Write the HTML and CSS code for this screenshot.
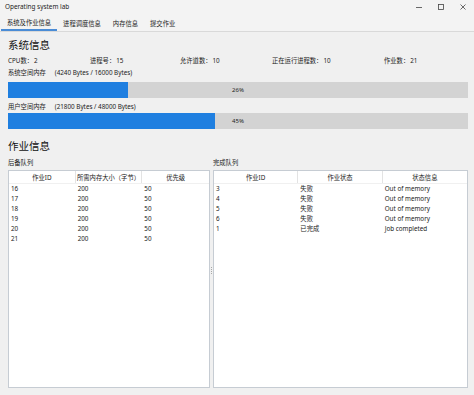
FILE: index.html
```html
<!DOCTYPE html>
<html lang="zh-CN">
<head>
<meta charset="utf-8">
<title>Operating system lab</title>
<link rel="stylesheet" href="styles.css">
</head>
<body>
<div class="window">
  <div class="titlebar">
    <span class="title">Operating system lab</span>
    <div class="controls">
      <svg class="ctl" viewBox="0 0 10 10" width="10" height="10"><line x1="2" y1="5.5" x2="8" y2="5.5"/></svg>
      <svg class="ctl" viewBox="0 0 10 10" width="10" height="10"><rect x="2.5" y="2.5" width="5" height="5"/></svg>
      <svg class="ctl" viewBox="0 0 10 10" width="10" height="10"><line x1="2.5" y1="2.5" x2="7.5" y2="7.5"/><line x1="7.5" y1="2.5" x2="2.5" y2="7.5"/></svg>
    </div>
  </div>
  <div class="tabs">
    <div class="tab active">系统及作业信息</div>
    <div class="tab">进程调度信息</div>
    <div class="tab">内存信息</div>
    <div class="tab">提交作业</div>
  </div>
  <div class="content">
    <h2 class="section-title">系统信息</h2>
    <div class="stats">
      <span>CPU数：<span class="val">2</span></span>
      <span>进程号：<span class="val">15</span></span>
      <span>允许道数：<span class="val">10</span></span>
      <span>正在运行进程数：<span class="val">10</span></span>
      <span>作业数：<span class="val">21</span></span>
    </div>
    <div class="mem-label first">系统空间内存<span class="detail">(4240 Bytes / 16000 Bytes)</span></div>
    <div class="bar bar-first"><div class="fill" style="width:26%"></div><span class="pct">26%</span></div>
    <div class="mem-label">用户空间内存<span class="detail">(21800 Bytes / 48000 Bytes)</span></div>
    <div class="bar bar-second"><div class="fill" style="width:45%"></div><span class="pct">45%</span></div>

    <h2 class="section-title second">作业信息</h2>
    <div class="queues">
      <div class="queue">
        <div class="queue-label">后备队列</div>
        <div class="table">
          <div class="thead">
            <div class="th">作业ID</div>
            <div class="th">所需内存大小（字节）</div>
            <div class="th">优先级</div>
          </div>
          <div class="tr"><div class="td">16</div><div class="td">200</div><div class="td">50</div></div>
          <div class="tr"><div class="td">17</div><div class="td">200</div><div class="td">50</div></div>
          <div class="tr"><div class="td">18</div><div class="td">200</div><div class="td">50</div></div>
          <div class="tr"><div class="td">19</div><div class="td">200</div><div class="td">50</div></div>
          <div class="tr"><div class="td">20</div><div class="td">200</div><div class="td">50</div></div>
          <div class="tr"><div class="td">21</div><div class="td">200</div><div class="td">50</div></div>
        </div>
      </div>
      <div class="splitter"><div class="grip"></div></div>
      <div class="queue">
        <div class="queue-label">完成队列</div>
        <div class="table">
          <div class="thead">
            <div class="th">作业ID</div>
            <div class="th">作业状态</div>
            <div class="th">状态信息</div>
          </div>
          <div class="tr"><div class="td">3</div><div class="td">失败</div><div class="td">Out of memory</div></div>
          <div class="tr"><div class="td">4</div><div class="td">失败</div><div class="td">Out of memory</div></div>
          <div class="tr"><div class="td">5</div><div class="td">失败</div><div class="td">Out of memory</div></div>
          <div class="tr"><div class="td">6</div><div class="td">失败</div><div class="td">Out of memory</div></div>
          <div class="tr"><div class="td">1</div><div class="td">已完成</div><div class="td">Job completed</div></div>
        </div>
      </div>
    </div>
  </div>
</div>
</body>
</html>
```
FILE: styles.css
```css
html, body {
  margin: 0;
  padding: 0;
}
body {
  width: 474px;
  height: 395px;
  overflow: hidden;
  background: #f0f0f0;
  font-family: "Noto Sans", "Noto Sans CJK SC", sans-serif;
  font-size: 6.3px;
  color: #1a1a1a;
}
.window {
  width: 474px;
  height: 395px;
  display: flex;
  flex-direction: column;
  background: #f0f0f0;
}
.titlebar {
  height: 16px;
  display: flex;
  align-items: center;
  justify-content: space-between;
  background: #f3f3f3;
  padding: 0 0 0 5px;
}
.title {
  font-size: 6.4px;
  line-height: 10px;
  margin-top: -2px;
  color: #222;
}
.controls {
  display: flex;
  align-items: center;
  gap: 12px;
  padding-right: 6px;
  margin-top: -3px;
}
.ctl {
  fill: none;
  stroke: #444;
  stroke-width: 0.8;
}
.tabs {
  height: 15px;
  display: flex;
  padding-left: 1px;
  border-bottom: 1px solid #d9d9d9;
  background: #f3f3f3;
}
.tab {
  padding: 0 6px;
  line-height: 15px;
  height: 15px;
  box-sizing: border-box;
  color: #1a1a1a;
}
.tab.active {
  border-bottom: 2px solid #4a8cd6;
  line-height: 14px;
}
.content {
  padding: 0 6px 0 8px;
  display: flex;
  flex-direction: column;
}
.section-title {
  margin: 6px 0 0 0;
  font-size: 10.5px;
  font-weight: normal;
  line-height: 14px;
  color: #111;
}
.section-title.second {
  margin-top: 10px;
}
.stats {
  margin-top: 4px;
  line-height: 10px;
  display: grid;
  grid-template-columns: 82px 90px 92px 112px auto;
}
.val {
  margin-left: 1px;
}
.mem-label {
  line-height: 10px;
  margin-top: 4px;
}
.mem-label.first {
  margin-top: 2px;
}
.detail {
  margin-left: 9px;
}
.bar {
  position: relative;
  height: 16px;
  background: #d3d3d3;
  display: flex;
  align-items: center;
  justify-content: center;
}
.bar-first {
  margin-top: 4px;
}
.bar-second {
  margin-top: 1px;
}
.fill {
  position: absolute;
  left: 0;
  top: 0;
  bottom: 0;
  background: #1f7fe0;
}
.pct {
  position: relative;
  font-size: 6px;
  color: #222;
}
.queues {
  display: grid;
  grid-template-columns: 202px 3px 1fr;
}
.queue {
  display: flex;
  flex-direction: column;
}
.queue-label {
  margin-top: 5px;
  line-height: 10px;
  height: 10px;
}
.table {
  margin-top: 2px;
  height: 218px;
  box-sizing: border-box;
  background: #ffffff;
  border: 1px solid #c6ccd3;
}
.thead, .tr {
  display: grid;
  grid-template-columns: 1fr 1fr 1fr;
}
.thead {
  height: 13px;
  line-height: 13px;
  border-bottom: 1px solid #f0f0f0;
  box-sizing: border-box;
}
.th {
  text-align: center;
  border-right: 1px solid #e3e3e3;
  white-space: nowrap;
  overflow: hidden;
}
.th:last-child {
  border-right: none;
}
.tr {
  height: 10px;
  line-height: 10px;
}
.td {
  padding-left: 2px;
  white-space: nowrap;
}
.splitter {
  position: relative;
}
.grip {
  position: absolute;
  left: 1px;
  top: 114px;
  width: 1px;
  height: 8px;
  background: repeating-linear-gradient(to bottom, #a8a8a8 0 1px, transparent 1px 2px);
}
```
